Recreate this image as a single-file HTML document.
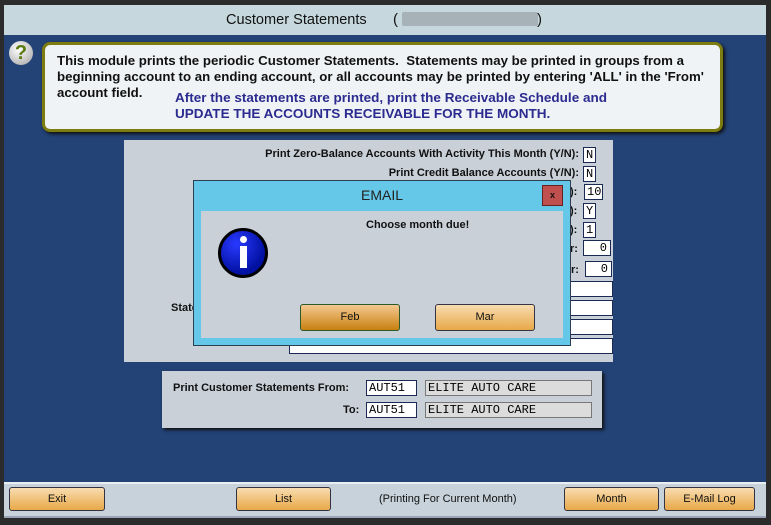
<!DOCTYPE html><html><head><style>
*{margin:0;padding:0;box-sizing:border-box}
body{width:771px;height:525px;background:#2b2b2b;position:relative;overflow:hidden;font-family:"Liberation Sans",sans-serif}
.a{position:absolute}
.top{left:4px;top:5px;width:762px;height:30px;background:#c6d8de}
.main{left:4px;top:35px;width:762px;height:447px;background:#234276}
.bot{left:4px;top:482px;width:762px;height:36px;background:#c8d2da;border-top:2px solid #e8eef2;border-bottom:2px solid #9aa6b8}
.lbl{font-size:11px;font-weight:bold;color:#111;text-align:right;white-space:nowrap}
.in{background:#fff;border:1px solid #1a2a55;font-family:"Liberation Mono",monospace;font-size:12px;color:#000;padding-left:2px;line-height:14px}
.btn{border:1px solid #334;border-radius:3px;background:linear-gradient(#f8dcb0,#e8a848);font-size:11px;text-align:center;line-height:22px;color:#111}
.cond{display:inline-block;transform-origin:0 0;white-space:nowrap}
</style></head><body>
<div class="a top"></div>
<div class="a" style="left:226px;top:11px;font-size:15px;color:#111"><span class="cond" style="transform:scaleX(0.97)">Customer Statements</span></div>
<div class="a" style="left:393px;top:11px;font-size:15px;color:#111">(</div>
<div class="a" style="left:402px;top:12px;width:136px;height:14px;background:#a6b2b8;border-radius:2px"></div>
<div class="a" style="left:537px;top:11px;font-size:15px;color:#111">)</div>
<div class="a main"></div>
<div class="a" style="left:9px;top:41px;width:24px;height:24px;border-radius:50%;background:radial-gradient(circle at 40% 35%,#fff,#a0a0a0);color:#5a7a10;font-weight:bold;font-size:20px;text-align:center;line-height:24px">?</div>
<div class="a" style="left:42px;top:42px;width:681px;height:90px;border:3px solid #7c7c10;border-radius:8px;background:#f0f3f5;box-shadow:2px 2px 3px #111"></div>
<div class="a" style="left:57px;top:53px;font-size:13px;font-weight:bold;color:#111;line-height:16px"><span class="cond" style="transform:scaleX(1.02)">This module prints the periodic Customer Statements.&nbsp; Statements may be printed in groups from a<br>beginning account to an ending account, or all accounts may be printed by entering 'ALL' in the 'From'<br>account field.</span></div>
<div class="a" style="left:175px;top:90px;font-size:13px;font-weight:bold;color:#2b2b90;line-height:16px"><span class="cond" style="transform:scaleX(1.04)">After the statements are printed, print the Receivable Schedule and<br>UPDATE THE ACCOUNTS RECEIVABLE FOR THE MONTH.</span></div>

<div class="a" style="left:124px;top:140px;width:489px;height:222px;background:#c9d0d8"></div>
<div class="a lbl" style="right:192px;top:148px">Print Zero-Balance Accounts With Activity This Month (Y/N):</div>
<div class="a in" style="left:583px;top:147px;width:13px;height:16px">N</div>
<div class="a lbl" style="right:192px;top:167px">Print Credit Balance Accounts (Y/N):</div>
<div class="a in" style="left:583px;top:166px;width:13px;height:16px">N</div>
<div class="a lbl" style="left:570px;top:186px">):</div><div class="a in" style="left:584px;top:184px;width:19px;height:16px">10</div>
<div class="a lbl" style="left:570px;top:205px">):</div><div class="a in" style="left:583px;top:203px;width:13px;height:16px">Y</div>
<div class="a lbl" style="left:570px;top:224px">):</div><div class="a in" style="left:583px;top:222px;width:13px;height:16px">1</div>
<div class="a lbl" style="left:570px;top:243px">r:</div><div class="a in" style="left:583px;top:240px;width:28px;height:16px;text-align:right;padding-right:3px">0</div>
<div class="a lbl" style="left:571px;top:264px">r:</div><div class="a in" style="left:585px;top:261px;width:27px;height:16px;text-align:right;padding-right:3px">0</div>
<div class="a in" style="left:289px;top:281px;width:324px;height:16px"></div>
<div class="a in" style="left:289px;top:300px;width:324px;height:16px"></div>
<div class="a in" style="left:289px;top:319px;width:324px;height:16px"></div>
<div class="a in" style="left:289px;top:338px;width:324px;height:16px"></div>
<div class="a lbl" style="left:171px;top:302px">State</div>

<div class="a" style="left:193px;top:180px;width:378px;height:166px;background:#66c8e8;border:1px solid #2a4050"></div>
<div class="a" style="left:193px;top:187px;width:378px;text-align:center;font-size:14px;color:#222">EMAIL</div>
<div class="a" style="left:542px;top:185px;width:21px;height:21px;background:#c0504d;border:1px solid #6a2020;color:#111;font-size:9px;font-weight:bold;text-align:center;line-height:19px">x</div>
<div class="a" style="left:201px;top:211px;width:362px;height:127px;background:#c9d0d8"></div>
<div class="a" style="left:218px;top:228px;width:50px;height:50px;border-radius:50%;background:radial-gradient(circle at 35% 30%,#2a3aff,#0010a0 70%);border:3px solid #000"></div>
<div class="a" style="left:240px;top:236px;width:7px;height:7px;border-radius:50%;background:#fff"></div>
<div class="a" style="left:240px;top:246px;width:7px;height:22px;background:#fff"></div>
<div class="a" style="left:366px;top:219px;font-size:11px;font-weight:bold;color:#111">Choose month due!</div>
<div class="a btn" style="left:300px;top:304px;width:100px;height:27px;line-height:25px;background:linear-gradient(#f4c890,#c88010);border-color:#2a5a2a">Feb</div>
<div class="a btn" style="left:435px;top:304px;width:100px;height:27px;line-height:25px">Mar</div>

<div class="a" style="left:162px;top:371px;width:440px;height:57px;background:#c9d0d8;box-shadow:2px 2px 3px #111"></div>
<div class="a" style="left:173px;top:382px;font-size:11px;font-weight:bold;color:#111">Print Customer Statements From:</div>
<div class="a" style="left:343px;top:404px;font-size:11px;font-weight:bold;color:#111">To:</div>
<div class="a in" style="left:366px;top:380px;width:51px;height:16px">AUT51</div>
<div class="a in" style="left:366px;top:402px;width:51px;height:16px">AUT51</div>
<div class="a in" style="left:425px;top:380px;width:167px;height:16px;background:#dcdcdc;border-color:#777">ELITE AUTO CARE</div>
<div class="a in" style="left:425px;top:402px;width:167px;height:16px;background:#dcdcdc;border-color:#777">ELITE AUTO CARE</div>

<div class="a bot"></div>
<div class="a btn" style="left:9px;top:487px;width:96px;height:24px">Exit</div>
<div class="a btn" style="left:236px;top:487px;width:95px;height:24px">List</div>
<div class="a" style="left:379px;top:493px;font-size:11px;color:#111">(Printing For Current Month)</div>
<div class="a btn" style="left:564px;top:487px;width:95px;height:24px">Month</div>
<div class="a btn" style="left:664px;top:487px;width:91px;height:24px">E-Mail Log</div>
</body></html>
